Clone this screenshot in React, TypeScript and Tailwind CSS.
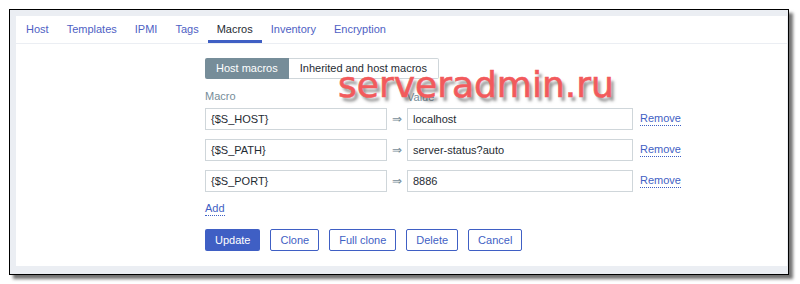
import React from 'react';

const tabs = ['Host', 'Templates', 'IPMI', 'Tags', 'Macros', 'Inventory', 'Encryption'];

const macros = [
  { name: '{$S_HOST}', value: 'localhost' },
  { name: '{$S_PATH}', value: 'server-status?auto' },
  { name: '{$S_PORT}', value: '8886' },
];

const buttons = ['Clone', 'Full clone', 'Delete', 'Cancel'];

export default function App() {
  return (
    <div className="h-[284px] w-[800px] bg-white pl-[9px] pt-[9px] text-[11px] leading-[13px] text-[#1f2c33]" style={{ fontFamily: '"Liberation Sans", Arial, sans-serif' }}>
      <div className="flex h-[266px] w-[780px] flex-col border border-black bg-[#ebeef3] pb-[8px] pl-[6px] pr-px pt-[6px] shadow-[4px_4px_3px_rgba(0,0,0,0.55)]">
        <div className="relative flex-1 bg-white">
          {/* tabs */}
          <div className="flex h-[28px] items-end border-b border-[#ebeef3] pl-[1px]">
            {tabs.map((t) => (
              <div
                key={t}
                className={
                  t === 'Macros'
                    ? 'flex h-full items-center border-b-[3px] border-[#3f5fc4] px-[9px] pt-[3px] text-[#1f2c33]'
                    : 'flex h-full items-center px-[9px] text-[#4f5fc4]'
                }
              >
                {t}
              </div>
            ))}
          </div>

          <div className="pl-[189px] pt-[14px]">
            {/* segmented */}
            <div className="flex h-[21px]">
              <div className="flex items-center rounded-l-[2px] bg-[#768d99] px-[11px] text-white">Host macros</div>
              <div className="flex items-center rounded-r-[2px] border border-l-0 border-[#cfd6da] px-[11px] text-[#1f2c33]">Inherited and host macros</div>
            </div>

            <div className="mt-[11px] flex text-[#768d99]">
              <div className="w-[202px]">Macro</div>
              <div className="pt-px">Value</div>
            </div>

            <div className="mt-[4px] flex flex-col gap-[9px]">
              {macros.map((m) => (
                <div key={m.name} className="flex h-[22px] items-center">
                  <div className="flex h-full w-[182px] items-center border border-[#cfd6da] px-[5px]">{m.name}</div>
                  <div className="w-[20px] text-center text-[12px] text-[#768d99]">⇒</div>
                  <div className="flex h-full w-[226px] items-center border border-[#cfd6da] px-[5px]">{m.value}</div>
                  <span className="ml-[7px] border-b border-dotted border-[#3f5fc4] text-[#3f5fc4]">Remove</span>
                </div>
              ))}
            </div>

            <div className="mt-[10px] flex">
              <span className="border-b border-dotted border-[#3f5fc4] text-[#3f5fc4]">Add</span>
            </div>

            <div className="mt-[13px] flex gap-[10px]">
              <div className="flex h-[22px] items-center rounded-[2px] bg-[#3f5fc4] px-[10px] text-white">Update</div>
              {buttons.map((b) => (
                <div key={b} className="flex h-[22px] items-center rounded-[2px] border border-[#3f5fc4] px-[9px] text-[#3f5fc4]">
                  {b}
                </div>
              ))}
            </div>
          </div>

          {/* watermark */}
          <div
            className="pointer-events-none absolute left-[322px] top-[51px] text-[36px] leading-none text-[#f25a5c]"
            style={{ fontFamily: '"DejaVu Sans", sans-serif', textShadow: '3px 4px 3px rgba(60,60,60,0.55)', WebkitTextStroke: '0.6px #f25a5c' }}
          >
            serveradmin.ru
          </div>
        </div>
      </div>
    </div>
  );
}
